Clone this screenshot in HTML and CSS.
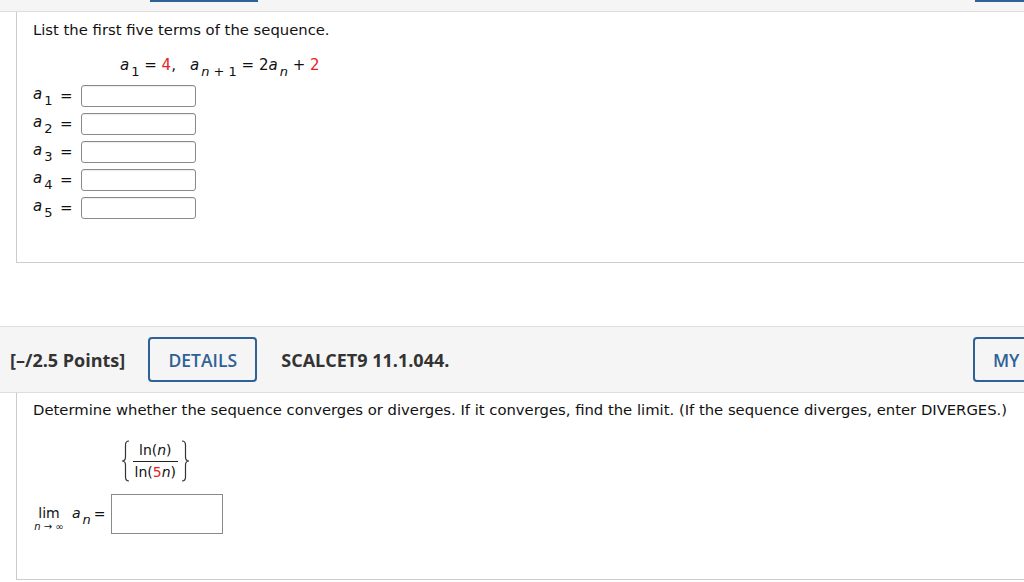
FILE: index.html
```html
<!DOCTYPE html>
<html lang="en">
<head>
<meta charset="utf-8">
<title>Sequence questions</title>
<link rel="stylesheet" href="styles.css">
</head>
<body>
<div class="page">
  <div class="topbar">
    <span class="stub stub-a"></span>
    <span class="stub stub-b"></span>
  </div>

  <section class="qbody q1">
    <p class="prompt">List the first five terms of the sequence.</p>
    <div class="eq"><span class="v">a</span><span class="sb">1</span> = <span class="red">4</span>,<span class="gap"></span><span class="v">a</span><span class="sb"><span class="v">n</span> + 1</span> = 2<span class="v">a</span><span class="sb"><span class="v">n</span></span> + <span class="red">2</span></div>
    <div class="rows">
      <div class="row"><span class="lbl"><span class="v">a</span><span class="sb">1</span></span><span class="eqs">=</span><input class="ans" type="text"></div>
      <div class="row"><span class="lbl"><span class="v">a</span><span class="sb">2</span></span><span class="eqs">=</span><input class="ans" type="text"></div>
      <div class="row"><span class="lbl"><span class="v">a</span><span class="sb">3</span></span><span class="eqs">=</span><input class="ans" type="text"></div>
      <div class="row"><span class="lbl"><span class="v">a</span><span class="sb">4</span></span><span class="eqs">=</span><input class="ans" type="text"></div>
      <div class="row"><span class="lbl"><span class="v">a</span><span class="sb">5</span></span><span class="eqs">=</span><input class="ans" type="text"></div>
    </div>
  </section>

  <header class="qhead">
    <span class="points">[–/2.5 Points]</span>
    <button class="hbtn details" type="button">DETAILS</button>
    <span class="qid">SCALCET9 11.1.044.</span>
    <button class="hbtn mynotes" type="button">MY</button>
  </header>

  <section class="qbody q2">
    <p class="prompt">Determine whether the sequence converges or diverges. If it converges, find the limit. (If the sequence diverges, enter DIVERGES.)</p>
    <div class="seq">
      <svg class="brace" width="9" height="42" viewBox="0 0 9 42" aria-hidden="true">
        <path d="M8 1 Q4.5 1 4.5 5 L4.5 17 Q4.5 21 1 21 Q4.5 21 4.5 25 L4.5 37 Q4.5 41 8 41" fill="none" stroke="#333" stroke-width="1.2"/>
      </svg>
      <span class="frac">
        <span class="num">ln(<span class="v">n</span>)</span>
        <span class="den">ln(<span class="red">5</span><span class="v">n</span>)</span>
      </span>
      <svg class="brace" width="9" height="42" viewBox="0 0 9 42" aria-hidden="true">
        <path d="M1 1 Q4.5 1 4.5 5 L4.5 17 Q4.5 21 8 21 Q4.5 21 4.5 25 L4.5 37 Q4.5 41 1 41" fill="none" stroke="#333" stroke-width="1.2"/>
      </svg>
    </div>
    <div class="limrow">
      <span class="lim">
        <span class="limw">lim</span>
        <span class="limsub"><span class="v">n</span> → ∞</span>
      </span>
      <span class="limexpr"><span class="v">a</span><span class="sb"><span class="v">n</span></span></span>
      <span class="eqs2">=</span>
      <input class="ans2" type="text">
    </div>
  </section>
</div>
</body>
</html>
```

FILE: styles.css
```css
html, body {
  margin: 0;
  padding: 0;
  background: #fff;
  overflow: hidden;
}

body {
  font-family: "DejaVu Sans", Verdana, sans-serif;
  color: #111;
}

.page {
  width: 1120px;
}

.topbar {
  height: 11px;
  background: #f5f5f5;
  border-bottom: 1px solid #ddd;
  display: flex;
  align-items: flex-start;
}

.stub {
  display: block;
  height: 2px;
  background: #2f6196;
}

.stub-a {
  margin-left: 150px;
  width: 108px;
}

.stub-b {
  margin-left: 717px;
  width: 137px;
}

.qbody {
  margin-left: 16px;
  border-left: 1px solid #ccc;
  border-bottom: 1px solid #ccc;
  box-sizing: border-box;
  padding-left: 16px;
}

.q1 {
  height: 251px;
  padding-top: 9px;
}

.q2 {
  height: 187px;
  padding-top: 8px;
}

.prompt {
  margin: 0;
  font-size: 14.8px;
  line-height: 18px;
  white-space: nowrap;
}

.v {
  font-style: italic;
}

.red {
  color: #e8231f;
}

.sb {
  font-size: 13px;
  position: relative;
  top: 6px;
  margin-left: 2px;
}

.gap {
  display: inline-block;
  width: 14px;
}

.eq {
  margin-left: 87px;
  margin-top: 17px;
  font-size: 15px;
  line-height: 18px;
  white-space: pre;
}

.rows {
  margin-top: 10px;
  display: flex;
  flex-direction: column;
  gap: 6px;
}

.row {
  display: flex;
  align-items: center;
  height: 22px;
  font-size: 15px;
}

.lbl {
  width: 27px;
  position: relative;
  top: -2px;
}

.eqs {
  width: 21px;
}

.ans {
  box-sizing: border-box;
  width: 115px;
  height: 22px;
  border: 1px solid #8a8a8a;
  border-radius: 3px;
  background: #fff;
  margin: 0;
  padding: 0;
  box-shadow: inset 0 1px 1px rgba(0,0,0,0.08);
}

.qhead {
  margin-top: 63px;
  border-top: 1px solid #ddd;
  border-bottom: 1px solid #ddd;
  background: #f5f5f5;
  padding: 10px 10px 10px 10px;
  display: flex;
  align-items: center;
  font-family: "Open Sans", sans-serif;
  color: #333;
}

.points, .qid {
  font-weight: 700;
  font-size: 18px;
}

.hbtn {
  box-sizing: border-box;
  height: 45px;
  border: 2px solid #2f6196;
  border-radius: 4px;
  background: #fff0;
  color: #2f6196;
  font-family: "Open Sans", sans-serif;
  font-size: 17.5px;
  font-weight: 600;
  padding: 0 18px;
  margin: 0;
}

.details {
  margin-left: 23px;
  width: 109px;
  text-align: center;
  padding: 0;
}

.qid {
  margin-left: 24px;
}

.mynotes {
  margin-left: auto;
  width: 137px;
  text-align: left;
}

.seq {
  display: flex;
  align-items: center;
  margin-left: 88px;
  margin-top: 20px;
  height: 44px;
}

.frac {
  display: inline-flex;
  flex-direction: column;
  align-items: center;
  font-size: 14px;
  line-height: 17px;
  margin: 0 1px;
}

.num {
  padding: 0 8px 2px;
}

.den {
  border-top: 1px solid #222;
  padding: 2px 2px 0;
}

.limrow {
  display: flex;
  align-items: center;
  margin-top: 11px;
  font-size: 14px;
}

.lim {
  display: inline-flex;
  flex-direction: column;
  align-items: center;
  width: 36px;
  margin-left: -2px;
  position: relative;
  top: 4px;
}

.limw {
  line-height: 16px;
}

.limsub {
  font-size: 10px;
  line-height: 11px;
  white-space: nowrap;
}

.limexpr {
  margin-left: 5px;
  position: relative;
  top: -1px;
}

.eqs2 {
  margin-left: 3px;
  width: 17px;
}

.ans2 {
  box-sizing: border-box;
  width: 112px;
  height: 40px;
  border: 1px solid #8a8a8a;
  border-radius: 0;
  background: #fff;
  margin: 0;
  padding: 0;
}
```
